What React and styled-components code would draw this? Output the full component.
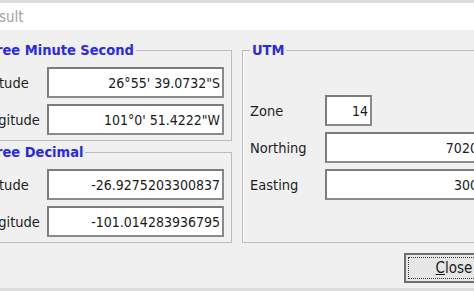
import React from 'react';
import styled, { createGlobalStyle } from 'styled-components';

const GlobalStyle = createGlobalStyle`
  html, body {
    margin: 0;
    padding: 0;
    width: 474px;
    height: 291px;
    overflow: hidden;
    background: #dcdcdc;
    font-family: "DejaVu Sans Condensed", "DejaVu Sans", sans-serif;
  }
`

const Frame = styled.div`
  display: flex;
  flex-direction: column;
  width: 474px;
  height: 291px;
  padding-top: 3px;
  padding-bottom: 3px;
  box-sizing: border-box;
  overflow: hidden;
`

const TitleBar = styled.div`
  height: 27px;
  flex-shrink: 0;
  background: #ffffff;
  display: flex;
  align-items: center;
  font-size: 15px;
  color: #a3a3a3;
  white-space: nowrap;
`

const TitleText = styled.span`
  margin-left: -18px;
`

const Body = styled.div`
  flex: 1;
  background: #f0f0f0;
  overflow: hidden;
`

const Dialog = styled.div`
  width: 620px;
  margin-left: -46px;
  padding: 12px 8px 0;
  box-sizing: border-box;
  display: flex;
  flex-direction: column;
  gap: 10px;
`

const Columns = styled.div`
  display: flex;
  gap: 10px;
  align-items: stretch;
`

const LeftColumn = styled.div`
  display: flex;
  flex-direction: column;
  gap: 3px;
  width: 270px;
`

const Group = styled.fieldset`
  margin: 0;
  padding: ${({ $top }) => $top || 9}px 7px 5px ${({ $left }) => $left || 9}px;
  border: 1px solid #bcbcbc;
  box-shadow: inset 1px 0 0 #fdfdfd;
  min-width: 0;
  display: flex;
  flex-direction: column;
  gap: 6px;
  width: ${({ $width }) => $width}px;
  box-sizing: border-box;
`

const Legend = styled.legend`
  margin-left: ${({ $shift }) => $shift || 0}px;
  padding: 0 2px;
  color: #2a2ae0;
  font-weight: bold;
  font-size: 14.5px;
  line-height: 16px;
  white-space: nowrap;
`

const Row = styled.div`
  display: flex;
  align-items: center;
  height: 31px;
`

const Label = styled.span`
  width: ${({ $w }) => $w || 75}px;
  flex-shrink: 0;
  font-size: 14.5px;
  color: #1e1e24;
  white-space: nowrap;
`

const Field = styled.div`
  height: 31px;
  width: ${({ $w }) => $w}px;
  flex-shrink: 0;
  box-sizing: border-box;
  background: #ffffff;
  border: 2px solid #7c7c7c;
  border-right-color: #8a8a8a;
  border-bottom-color: #8a8a8a;
  display: flex;
  align-items: center;
  justify-content: flex-end;
  padding-right: 2px;
  font-size: 14px;
  color: #1a1a1a;
  white-space: nowrap;
  overflow: hidden;
`

const Footer = styled.div`
  display: flex;
  padding-left: 442px;
`

const Button = styled.button`
  width: 100px;
  height: 30px;
  padding: 2px;
  background: #e6e6e6;
  border: 2px solid #6f6f6f;
  font-family: inherit;
  font-size: 15px;
  color: #1a1a1a;
  cursor: pointer;
`

const FocusRing = styled.span`
  display: flex;
  align-items: center;
  justify-content: center;
  height: 100%;
  border: 1px dotted #3a3a3a;
  box-sizing: border-box;
`

const dms = [
  { label: 'Latitude', value: '26°55\' 39.0732"S' },
  { label: 'Longitude', value: '101°0\' 51.4222"W' },
]

const decimal = [
  { label: 'Latitude', value: '-26.9275203300837' },
  { label: 'Longitude', value: '-101.014283936795' },
]

const utm = [
  { label: 'Zone', value: '14', width: 47 },
  { label: 'Northing', value: '7020764.0862', width: 217 },
  { label: 'Easting', value: '300093.6217', width: 217 },
]

function CoordGroup({ title, rows }) {
  return (
    <Group $left={12}>
      <Legend $shift={-10}>{title}</Legend>
      {rows.map((r) => (
        <Row key={r.label}>
          <Label $w={72}>{r.label}</Label>
          <Field $w={177}>{r.value}</Field>
        </Row>
      ))}
    </Group>
  )
}

function App() {
  return (
    <Frame>
      <GlobalStyle />
      <TitleBar>
        <TitleText>Result</TitleText>
      </TitleBar>
      <Body>
        <Dialog>
          <Columns>
            <LeftColumn>
              <CoordGroup title="Degree Minute Second" rows={dms} />
              <CoordGroup title="Degree Decimal" rows={decimal} />
            </LeftColumn>
            <Group $top={37} $left={7} $width={320}>
              <Legend $shift={0}>UTM</Legend>
              {utm.map((r) => (
                <Row key={r.label}>
                  <Label>{r.label}</Label>
                  <Field $w={r.width}>{r.value}</Field>
                </Row>
              ))}
            </Group>
          </Columns>
          <Footer>
            <Button>
              <FocusRing>
                <span><u>C</u>lose</span>
              </FocusRing>
            </Button>
          </Footer>
        </Dialog>
      </Body>
    </Frame>
  );
}

export default App;
